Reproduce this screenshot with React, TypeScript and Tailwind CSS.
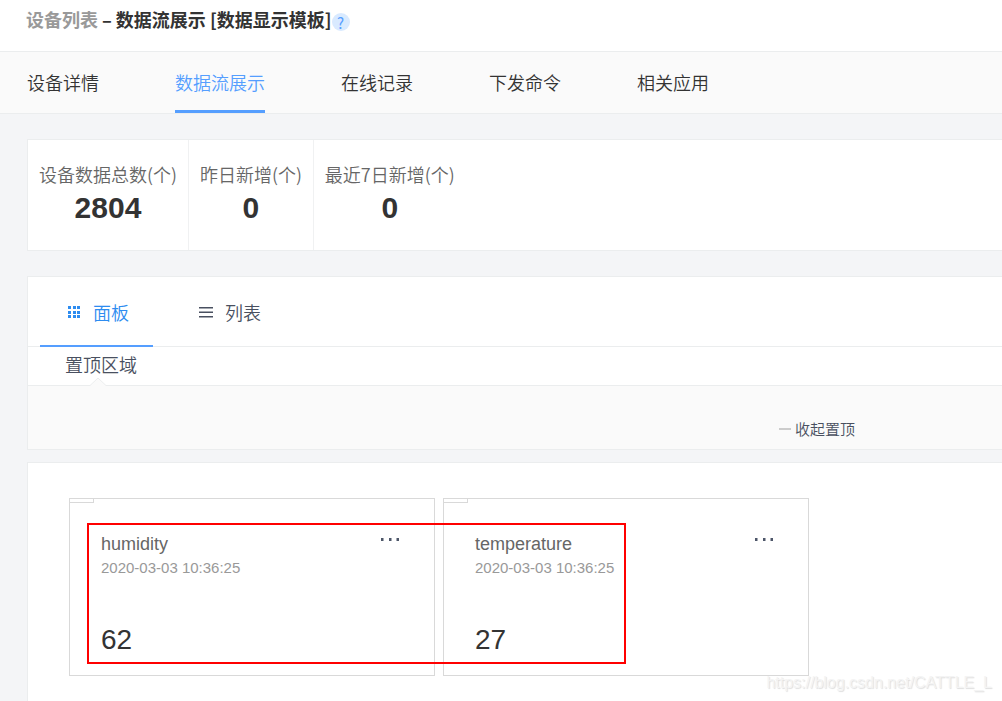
interface NavItem {
    label: string;
    active?: boolean;
}

interface Stat {
    label: string;
    value: number;
}

interface Stream {
    name: string;
    time: string;
    value: number;
}

const navItems: NavItem[] = [
    { label: "设备详情" },
    { label: "数据流展示", active: true },
    { label: "在线记录" },
    { label: "下发命令" },
    { label: "相关应用" },
];

const stats: Stat[] = [
    { label: "设备数据总数(个)", value: 2804 },
    { label: "昨日新增(个)", value: 0 },
    { label: "最近7日新增(个)", value: 0 },
];

const streams: Stream[] = [
    { name: "humidity", time: "2020-03-03 10:36:25", value: 62 },
    { name: "temperature", time: "2020-03-03 10:36:25", value: 27 },
];

function GridIcon() {
    const cells = [0, 5, 9];
    return (
        <svg width="13" height="13" viewBox="0 0 13 13" fill="currentColor" aria-hidden="true">
            {cells.map((y) => cells.map((x) => <rect key={`${x}-${y}`} x={x} y={y} width="3" height="3" />))}
        </svg>
    );
}

function ListIcon() {
    return (
        <svg width="14" height="12" viewBox="0 0 14 12" fill="currentColor" aria-hidden="true">
            <rect y="1" width="14" height="1.5" />
            <rect y="5.5" width="14" height="1.5" />
            <rect y="10" width="14" height="1.5" />
        </svg>
    );
}

function StreamCard({ name, time, value }: Stream) {
    return (
        <article className="relative w-[366px] border border-[#d9d9d9] bg-white px-[31px] pt-[33px] pb-[17px]">
            <span className="absolute top-0 left-0 h-1 w-6 border-r border-b border-[#d9d9d9]" />
            <div className="flex items-start justify-between">
                <h3 className="text-lg leading-6 text-[#666]">{name}</h3>
                <button type="button" aria-label="更多" className="flex h-3.5 items-center text-[#4d5669]">
                    <svg width="22" height="3" viewBox="0 0 22 3" fill="currentColor" aria-hidden="true">
                        <rect x="0" width="2.5" height="3" />
                        <rect x="8" width="2.5" height="3" />
                        <rect x="15.5" width="2.5" height="3" />
                    </svg>
                </button>
            </div>
            <p className="text-[15px] leading-6 text-[#999]">{time}</p>
            <p className="mt-[42px] text-[28px] leading-9 text-[#333]">{value}</p>
        </article>
    );
}

export default function App() {
    return (
        <div className="relative flex min-h-screen flex-col overflow-hidden bg-[#f4f5f7] font-['Noto_Sans_CJK_SC','Liberation_Sans',sans-serif] text-[#333]">
            <header className="flex items-end bg-white pt-[7px] pb-5 pl-[26px]">
                <h1 className="flex gap-1 text-lg leading-6 font-bold">
                    <a href="#" className="text-[#999]">设备列表</a>
                    <span>–</span>
                    <span>数据流展示 [数据显示模板]</span>
                </h1>
                <button type="button" aria-label="帮助" className="flex size-[18px] items-center justify-center rounded-full bg-[#d9eaff] text-[15px] leading-none text-[#569eff]">
                    ?
                </button>
            </header>

            <nav className="flex gap-[76px] border-y border-[#ebedee] bg-[#fafafa] pl-[27px] text-lg">
                {navItems.map(({ label, active }) => (
                    <a
                        key={label}
                        href="#"
                        className={
                            active
                                ? "flex h-[61px] items-center border-b-3 border-[#559eff] pt-0.5 font-[350] text-[#559eff]"
                                : "flex h-[61px] items-center pb-px font-[350]"
                        }
                    >
                        {label}
                    </a>
                ))}
            </nav>

            <main className="flex flex-1 flex-col pt-[25px] pl-[27px]">
                <section className="flex border-y border-l border-[#ebedee] bg-white">
                    {stats.map(({ label, value }) => (
                        <div key={label} className="border-r border-[#f0f1f2] px-[11px] pt-[22px] pb-5 text-center last:border-r-0">
                            <p className="text-lg leading-6 font-[350] text-[#666]">{label}</p>
                            <p className="font-['Liberation_Sans',sans-serif] text-3xl leading-11 font-bold">{value}</p>
                        </div>
                    ))}
                </section>

                <section className="mt-[25px] border-y border-l border-[#ebedee] bg-white">
                    <div role="tablist" className="flex h-[70px] gap-[18px] border-b border-[#ebedee] pl-3 text-lg font-[350]">
                        <button type="button" role="tab" aria-selected="true" className="-mb-px flex items-center gap-3 border-b-2 border-[#559eff] pt-0.5 pr-6 pl-7 text-[#2d8cf0]">
                            <GridIcon />
                            面板
                        </button>
                        <button type="button" role="tab" aria-selected="false" className="flex items-center gap-3 px-7 text-[#495060]">
                            <ListIcon />
                            列表
                        </button>
                    </div>
                    <div className="relative border-b border-[#ebedee] px-[37px] pt-[5px] pb-[9px] text-lg leading-6 font-[350] text-[#495060]">
                        置顶区域
                        <svg className="absolute -bottom-px left-[62px]" width="16" height="9" viewBox="0 0 16 9" aria-hidden="true">
                            <path d="M0 8.5 8 1l8 7.5V9H0z" fill="#fafafa" />
                            <path d="M0 8.5 8 1l8 7.5" fill="none" stroke="#ebedee" />
                        </svg>
                    </div>
                    <div className="flex justify-end bg-[#fafafa] pt-[31px] pr-[147px] pb-2">
                        <button type="button" className="flex items-center gap-1 text-[15px] leading-6 font-[350] text-[#495060]">
                            <span className="h-0.5 w-3 bg-[#ccc]" />
                            收起置顶
                        </button>
                    </div>
                </section>

                <section className="mt-3 flex-1 border-t border-l border-[#ebedee] bg-white pt-[35px] pb-6 pl-[41px] font-['Liberation_Sans',sans-serif]">
                    <div className="relative flex gap-2">
                        {streams.map((stream) => (
                            <StreamCard key={stream.name} {...stream} />
                        ))}
                        {/* red marker across both cards */}
                        <div className="pointer-events-none absolute top-[25px] left-[18px] h-[141px] w-[539px] border-2 border-[#f00]" />
                    </div>
                </section>
            </main>

            <p className="absolute right-2.5 bottom-1.5 font-['Liberation_Sans',sans-serif] text-base leading-6 text-[#f4f4f4] [text-shadow:1px_1px_1px_#dedede]">
                https://blog.csdn.net/CATTLE_L
            </p>
        </div>
    );
}
